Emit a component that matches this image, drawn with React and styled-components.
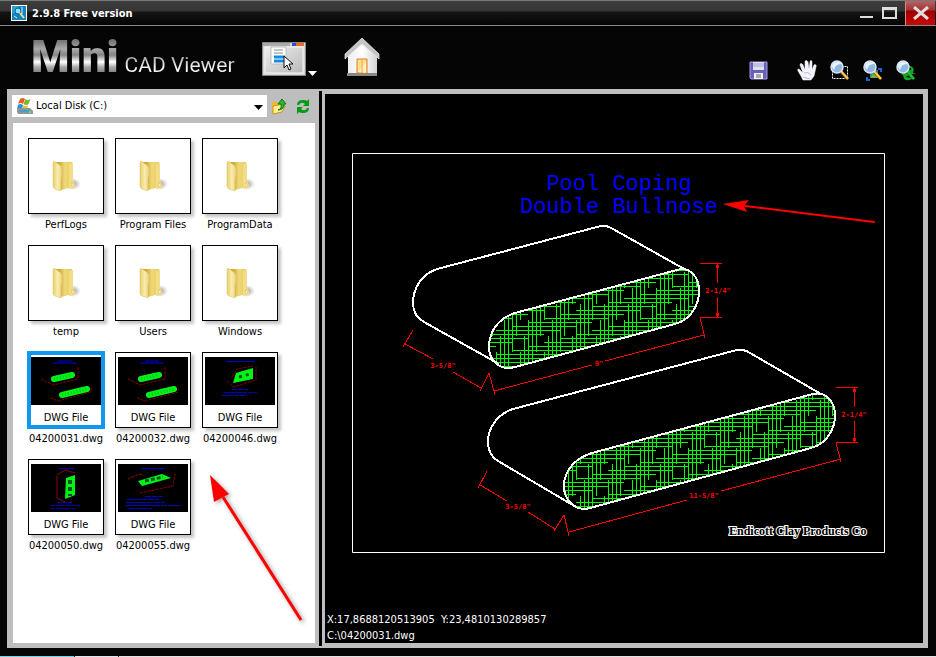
import React from "react";
import styled, { createGlobalStyle, css } from "styled-components";

const GlobalStyle = createGlobalStyle`
  * { box-sizing: border-box; }
  html, body, #root { height: 100%; }
  body { margin: 0; background: #000; overflow: hidden; }
  body, button, select {
    font-family: "DejaVu Sans Condensed", "DejaVu Sans", sans-serif;
    font-size: 11px;
  }
  svg { display: block; }
`;

const Window = styled.div`
  display: flex;
  flex-direction: column;
  height: 100vh;
  background: #050505;
`;

const TitleBar = styled.header`
  display: flex;
  align-items: center;
  flex: 0 0 26px;
  padding-left: 11px;
  color: #fff;
  border-top: 1px solid #777;
  border-bottom: 1px solid #8a8a8a;
  background: linear-gradient(#3d3d3d 0, #353535 10px, #151515 11px, #040404 100%);
`;

const Title = styled.h1`
  flex: 1;
  margin: 0 0 0 5px;
  font-size: 11px;
  font-weight: bold;
`;

const BareButton = styled.button`
  display: flex;
  align-items: center;
  justify-content: center;
  padding: 0;
  border: 0;
  background: none;
  color: inherit;
`;

const CaptionButton = styled(BareButton)`
  width: 23px;
  height: 24px;
`;

const CloseButton = styled(BareButton)`
  width: 30px;
  height: 24px;
  margin: 0 1px 0 4px;
  border-left: 1px solid #d88;
  background: linear-gradient(#b56464 0, #a13434 9px, #9c0000 10px, #c80808 100%);
`;

const Header = styled.div`
  display: flex;
  align-items: flex-start;
  flex: none;
  height: 63px;
  padding: 0 20px 0 31px;
`;

const Logo = styled.div`
  display: flex;
  align-items: baseline;
  width: 231px;
  padding-top: 5px;
  line-height: 52px;
  white-space: nowrap;
`;

const metal = css`
  color: transparent;
  background-clip: text;
  -webkit-background-clip: text;
`;

const LogoMark = styled.span`
  ${metal}
  font-family: Roboto, sans-serif;
  font-size: 44px;
  font-weight: 900;
  background-image: linear-gradient(#777 10px, #aaa 18px, #858585 24px, #fff 31px, #aaa 36px, #707070 44px);
`;

const LogoName = styled.span`
  ${metal}
  margin-left: 6px;
  font-family: Roboto, sans-serif;
  font-size: 21px;
  background-image: linear-gradient(#999 16px, #fff 30px, #bbb 42px);
`;

const OpenButton = styled(BareButton)`
  align-items: flex-end;
  gap: 2px;
  margin-top: 15px;
`;

const HomeButton = styled(BareButton)`
  margin: 11px 0 0 27px;
`;

const Tools = styled.div`
  display: flex;
  gap: 12px;
  margin: 34px 0 0 auto;
`;

const ToolButton = styled(BareButton)`
  width: 21px;
  height: 21px;
  margin-right: ${(p) => (p.$apart ? "15px" : "0")};
`;

const Body = styled.main`
  display: flex;
  flex: 1;
  min-height: 0;
  margin: 0 8px 0 7px;
  background: #bebebe;
`;

const Browser = styled.section`
  display: flex;
  flex-direction: column;
  flex: 0 0 312px;
  padding: 6px 4px 5px 5px;
`;

const LocationBar = styled.div`
  display: flex;
  align-items: center;
  height: 22px;
  margin-bottom: 6px;
`;

const DriveBox = styled.label`
  position: relative;
  flex: 0 0 255px;
  height: 22px;
  background: #fff;

  > svg { position: absolute; top: 2px; left: 4px; pointer-events: none; }
  > svg + svg { top: 10px; left: auto; right: 4px; }
`;

const DriveSelect = styled.select`
  width: 100%;
  height: 22px;
  padding: 0 20px 2px 24px;
  border: 0;
  appearance: none;
  background: #fff;
  color: #000;
`;

const NavButton = styled(BareButton)`
  width: 24px;
  height: 22px;
`;

const FileArea = styled.div`
  position: relative;
  flex: 1;
  min-height: 0;
  margin-left: 1px;
  padding: 15px;
  overflow: hidden;
  background: #fff;
`;

const FileGrid = styled.div`
  display: grid;
  grid-template-columns: repeat(auto-fill, 76px);
  gap: 11px;
`;

const FileItem = styled.button`
  display: flex;
  flex-direction: column;
  align-items: center;
  width: 76px;
  height: 96px;
  padding: 0;
  border: 0;
  background: none;
  color: #000;
  white-space: nowrap;
  line-height: 20px;
`;

const Card = styled.span`
  display: flex;
  flex-direction: column;
  flex: none;
  align-items: center;
  justify-content: ${(p) => (p.$drawing ? "flex-start" : "center")};
  width: 76px;
  height: 76px;
  padding-top: ${(p) => (p.$drawing ? "4px" : "0")};
  border: 1px solid #000;
  background: #fff;
  box-shadow: 3px 3px 3px #c4c4c4;
  line-height: 26px;

  > svg { flex: none; }

  ${(p) => p.$selected && css`
    border-color: #1297ee;
    box-shadow: 0 0 0 1px #1297ee, inset 0 0 0 2px #1297ee;
  `}
`;

const FileName = styled.span`
  flex: none;
  margin-top: 1px;
`;

const Callout = styled.svg`
  position: absolute;
  top: 340px;
  left: 187px;
  pointer-events: none;
`;

const Splitter = styled.div`
  flex: 0 0 3px;
  margin: 2px 0;
  background: #000;
`;

const Viewer = styled.section`
  display: flex;
  flex-direction: column;
  flex: 1;
  min-width: 0;
  margin: 5px 5px 5px 3px;
  background: #000;
`;

const Drawing = styled.svg`
  flex: 1;
  width: 100%;
  min-height: 0;
`;

const DrawingTitle = styled.text`
  font-family: "Liberation Mono", monospace;
  font-size: 22px;
  fill: #0000ff;
  text-anchor: middle;
`;

const DimensionText = styled.text`
  font-family: "DejaVu Sans Mono", monospace;
  font-size: 7px;
  font-weight: bold;
  fill: #ff0000;
  text-anchor: middle;
`;

const MakerText = styled.text`
  font-family: "Liberation Serif", serif;
  font-size: 12px;
  font-weight: bold;
  fill: #000;
  stroke: #fff;
  stroke-width: 2px;
  paint-order: stroke;
`;

const Status = styled.footer`
  flex: 0 0 32px;
  padding: 1px 0 0 2px;
  color: #fff;
  line-height: 16px;
  height: 32px;
  white-space: pre;
`;

const BottomEdge = styled.div`
  flex: 0 0 9px;
  border-bottom: 1px solid #e4e4e4;
  border-image: linear-gradient(90deg, #72d5e8 0 75px, #222 75px 76px, #dde8ee 76px 119px, #222 119px 120px, #e4e4e4 120px) 1;
`;

const AppIcon = () => (
  <svg width="16" height="16" viewBox="0 0 16 16">
    <rect x=".5" y=".5" width="15" height="15" fill="#1684bc" stroke="#fff" />
    <path d="M1 1h6v7H1z" fill="#2f9dd0" />
    <circle cx="7" cy="6" r="3" fill="#8fdcf8" stroke="#066192" />
    <path d="M9 8l4 5" stroke="#f6db8c" strokeWidth="2" />
    <path d="M11 2v7M3 11l3 2" stroke="#d4eefa" />
  </svg>
);

const DriveIcon = () => (
  <svg width="18" height="18" viewBox="0 0 18 18">
    <path d="M4 2q3-2 5 0L7 7q-2-2-5 0z" fill="#e95b24" />
    <path d="M9.5 2q2 2 5 0l-2 5q-2 2-5 0z" fill="#79b932" />
    <path d="M2 8q2-2 5 0l-1 4H1z" fill="#348be0" />
    <path d="M7.500 8q2 2 4.500 0l-1 4H6.500z" fill="#f4be28" />
    <path d="M1 11h13l3 3v3H2l-1-2z" fill="#8d969b" />
    <path d="M3 13h10l2 2H4z" fill="#439eca" />
    <path d="M13 14h2v2h-2z" fill="#6de36a" />
  </svg>
);

const UpFolderIcon = () => (
  <svg width="16" height="17" viewBox="0 0 16 17">
    <path d="M1 4l4-1 1 2h4v8l-8 3-1-2z" fill="#e9b834" />
    <path d="M2 8l10-2 2 2-3 6-9 2z" fill="#ffed94" stroke="#c99620" />
    <path d="M7 12q4-1 3-6H7l4-5 4 5h-2q0 6-6 6z" fill="#2fb52e" stroke="#087b17" />
  </svg>
);

const RefreshIcon = () => (
  <svg width="14" height="15" viewBox="0 0 14 15" fill="#079b14">
    <path d="M1 6q0-5 6-5 3 0 4 1l2-2v7H7l2-2Q5 2 3 6z" />
    <path d="M13 9q0 5-6 5-3 0-4-1l-2 2V8h6l-2 2q4 3 6-1z" />
  </svg>
);

const OpenIcon = () => (
  <svg width="44" height="36" viewBox="0 0 44 36">
    <defs>
      <linearGradient id="pane" x2="1" y2="1"><stop stopColor="#eee" /><stop offset="1" stopColor="#b9b9b9" /></linearGradient>
    </defs>
    <path d="M.5 1.500h43v33H.5z" fill="#d8d8d8" stroke="#888" />
    <path d="M1 2h27v3H1z" fill="#aaa" />
    <path d="M30 2h4v3h-4z" fill="#3548e4" /><path d="M34 2h8v3h-8z" fill="#ee6921" />
    <path d="M3 6h38v26H3z" fill="url(#pane)" stroke="#f6f6f6" />
    <path d="M9 6h15v17H9z" fill="#fff" stroke="#bbb" />
    <path d="M12 9h9M12 12h9" stroke="#888" /><path d="M12 16h11M12 20h12" stroke="#168be6" strokeWidth="3" />
    <path d="M22 15v12l3-3 2 5 2-1-2-5h4z" fill="#fff" stroke="#111" />
  </svg>
);

const HomeIcon = () => (
  <svg width="36" height="41" viewBox="0 0 36 41">
    <defs>
      <linearGradient id="wall"><stop stopColor="#eee" /><stop offset=".5" stopColor="#fff" /><stop offset="1" stopColor="#d4d4d4" /></linearGradient>
    </defs>
    <path d="M4 19L18 5l15 14v18H4z" fill="url(#wall)" />
    <path d="M3 36h30v3H3z" fill="#888" />
    <path d="M18 1l17 16v5L18 7 1 22v-5z" fill="#c5c5c5" stroke="#eee" strokeWidth=".7" />
    <path d="M13 22h10v14H13z" fill="#ffdf91" stroke="#dc7c24" />
    <path d="M14 35l8-10v11z" fill="#fff3bd" /><path d="M18 22v14" stroke="#e9a845" />
  </svg>
);

const SaveIcon = () => (
  <svg width="19" height="19" viewBox="0 0 19 19">
    <path d="M1 1h17v17H2l-1-1z" fill="#6b60b7" stroke="#a89de8" />
    <path d="M4 1h11v8H4z" fill="#dde1f4" /><path d="M4 3h11M4 5h11" stroke="#9da3cc" />
    <path d="M5 12h9v6H5z" fill="#f2f2f2" /><path d="M7 13h5v4H7z" fill="#aaa" />
  </svg>
);

const HandIcon = () => (
  <svg width="20" height="21" viewBox="0 0 20 21">
    <path d="M6 20l-2-4-3-5c-1-2 1-3 2-1l3 3-3-8c0-2 2-2 3 0l2 5V2c0-2 2-2 3 0l1 7 1-7c0-2 2-2 2 0v8l2-5c1-1 3 0 2 2l-2 9-3 4z" fill="#f4f4fc" stroke="#fff" strokeWidth=".5" />
    <path d="M7 13q4-2 7 2M6 17l7 2" stroke="#b5b9d2" fill="none" />
  </svg>
);

const LensIcon = ({ mode }) => (
  <svg width="21" height="21" viewBox="0 0 21 21">
    {mode === "area" && <path d="M3.500 6.500h15v12h-15z" fill="none" stroke="#fff" strokeDasharray="2 1" />}
    {mode === "extents" && <><path d="M8 10h8v7H8z" fill="#397ba0" /><path d="M8 18l5-7 5 7z" fill="#65b849" /><path d="M16 9h3v3M5 17v3h3" stroke="#1663d1" strokeWidth="2" fill="none" /></>}
    {mode === "redraw" && <><path d="M13 5q8 2 5 8h3l-6 2-2-5h3q1-2-3-3z" fill="#16a626" /><path d="M17 19q-8 4-9-4H6l5-4 3 5h-3q2 3 6 1z" fill="#16a626" /></>}
    <path d="M12 12l7 7" stroke={mode === "redraw" ? "#0b7d20" : "#8d4b10"} strokeWidth="3" />
    <path d="M12 11l7 8" stroke={mode === "redraw" ? "#23bf37" : "#ffcd43"} strokeWidth="2" />
    <circle cx="8" cy="7" r="6" fill="#91b9e2" stroke="#dce5f4" strokeWidth="1.500" />
    <path d="M3 7q0-5 5-5t4 2q-6 0-7 6z" fill="#e6f4ff" />
  </svg>
);

const FolderIcon = () => (
  <svg width="30" height="32" viewBox="0 0 30 32">
    <defs>
      <linearGradient id="folder-back"><stop offset=".3" stopColor="#d0aa38" /><stop offset=".6" stopColor="#f0d878" /><stop offset="1" stopColor="#e8cc62" /></linearGradient>
      <linearGradient id="folder-front"><stop stopColor="#e9cf68" /><stop offset=".5" stopColor="#f9ecae" /><stop offset="1" stopColor="#ead078" /></linearGradient>
      <radialGradient id="folder-shade"><stop stopColor="#777" stopOpacity=".8" /><stop offset="1" stopColor="#999" stopOpacity="0" /></radialGradient>
    </defs>
    <ellipse cx="22" cy="24" rx="8" ry="6" fill="url(#folder-shade)" />
    <path d="M3 2h18v25l-11 3-7-3z" fill="url(#folder-back)" />
    <path d="M18 4l4-1v18l2 3v4l-6 1z" fill="#f2dc86" />
    <path d="M3 1l7 5q2 3 1 9l-1 4v12l-6-2q-2-1-2-3V3z" fill="url(#folder-front)" stroke="#d6bd60" strokeWidth=".5" />
    <path d="M21 27v-5l2 4z" fill="#fff" stroke="#d5b443" strokeWidth=".5" />
  </svg>
);

const thumbs = {
  slabs: (
    <>
      <path d="M22 6h24M27 4h14" stroke="#00d" />
      <path d="M10 22l12 6 25-6V10M19 41l8 3 33-9V29" stroke="#810000" fill="none" strokeDasharray="3 1" />
      <path d="M23 22l18-4M31 38l25-6" stroke="#00f516" strokeWidth="6" strokeLinecap="round" />
      <path d="M23 22l18-4M31 38l25-6" stroke="#0b3" strokeWidth="3" strokeDasharray="1 2" />
    </>
  ),
  angled: (
    <>
      <path d="M21 4.500h29" stroke="#00d" />
      <path d="M22 24l7 6 22-7V10M27 20l5-8 16-3" stroke="#810000" fill="none" strokeDasharray="3 1" />
      <path d="M28 26l3-10 17-5v11z" fill="#00f516" /><path d="M34 20l11-3" stroke="#052" strokeWidth="3" strokeDasharray="3 4" />
      <path d="M27 32.500h16M19 35.500h33M17 38.500h25" stroke="#00c" strokeDasharray="5 1" />
    </>
  ),
  upright: (
    <>
      <path d="M28 4.500h15" stroke="#00d" />
      <path d="M26 11l8-5 10 3M26 12v22l8 4" stroke="#900000" fill="none" />
      <path d="M35 14l9-3v20l-10 4z" fill="#00f516" /><path d="M39 16v16" stroke="#052" strokeWidth="4" strokeDasharray="4 3" />
      <path d="M27 38.500h15M20 41.500h29M20 44.500h24" stroke="#00c" strokeDasharray="4 1" />
    </>
  ),
  flat: (
    <>
      <path d="M24 4.500h22" stroke="#00d" />
      <path d="M22 29l33-7 2-12M10 15l9-4 6-1" stroke="#900000" fill="none" strokeDasharray="3 1" />
      <path d="M20 17l24-7 9 4-29 8z" fill="#00f516" /><path d="M27 17l18-4" stroke="#052" strokeWidth="3" strokeDasharray="4 2" />
      <path d="M27 32.500h18M9 35.500h32M8 38.500h39M8 41.500h55M10 44.500h24" stroke="#00c" strokeDasharray="6 1" />
    </>
  ),
};

const Thumbnail = ({ kind }) => (
  <svg width="70" height="48" viewBox="0 0 70 48">
    <path d="M0 0h70v48H0z" fill="#000" />
    {thumbs[kind]}
  </svg>
);

const files = [
  { name: "PerfLogs" }, { name: "Program Files" }, { name: "ProgramData" },
  { name: "temp" }, { name: "Users" }, { name: "Windows" },
  { name: "04200031.dwg", kind: "slabs", selected: true },
  { name: "04200032.dwg", kind: "slabs" },
  { name: "04200046.dwg", kind: "angled" },
  { name: "04200050.dwg", kind: "upright" },
  { name: "04200055.dwg", kind: "flat" },
];

// Houndstooth hatch: lines 4 apart, each dash 64 long with a 32 gap, stepped by 16 per line.
const steps = [0, 1, 2, 3, 4, 5];
const across = steps.map((k) => `M${k * 16 - 96} ${22.5 - k * 4}h64M${k * 16} ${22.5 - k * 4}h64`).join("");
const upward = steps.map((k) => `M${k * 4 + 0.5} ${96 - k * 16}v-64M${k * 4 + 0.5} ${192 - k * 16}v-64`).join("");

const faces = [
  "M515 313L677 270C690 266 699 277 699 291C699 306 690 320 675 324L515 367C500 371 489 361 489 347C489 331 499 318 515 313Z",
  "M592 453L813 394C826 391 835 402 835 415C835 430 826 444 811 448L590 508C575 512 564 500 564 486C564 471 575 458 592 453Z",
];

const Plan = () => (
  <Drawing viewBox="325 94 598 517" role="img" aria-label="Pool Coping Double Bullnose">
    <defs>
      <pattern id="across" width="96" height="24" patternUnits="userSpaceOnUse"><path d={across} stroke="#00ff00" /></pattern>
      <pattern id="upward" width="24" height="96" patternUnits="userSpaceOnUse"><path d={upward} stroke="#00ff00" /></pattern>
    </defs>
    <path d="M352.500 153.500h532v399h-532z" fill="none" stroke="#fff" />
    <DrawingTitle x="619" y="190">Pool Coping</DrawingTitle>
    <DrawingTitle x="619" y="213">Double Bullnose</DrawingTitle>
    {faces.map((d) => (
      <g key={d}>
        <path d={d} fill="url(#across)" />
        <path d={d} fill="url(#upward)" />
        <path d={d} fill="none" stroke="#fff" strokeWidth="2" shapeRendering="crispEdges" />
      </g>
    ))}
    <g fill="none" stroke="#fff" strokeWidth="2" shapeRendering="crispEdges">
      <path d="M686 270L613 229Q606 224 597 227L437 269C422 274 413 288 413 303Q413 316 424 322L499 364" />
      <path d="M821 394L750 353Q743 348 733 351L513 409C498 414 488 427 488 442Q488 455 498 461L571 504" />
    </g>
    <g fill="none" stroke="#ff0000" shapeRendering="crispEdges">
      <path d="M700 263.500h22M700 317.500h22M717.500 264v19M717.500 297v20M716 268l1.500-4 1.500 4M716 313l1.500 4 1.500-4" />
      <path d="M700 318l5 20M704 335l-99 26M592 365l-98 26M495 395l-6-22-9 18M481 388l-28-16M433 359l-28-15M413 330l-10 17" />
      <path d="M836 387.500h22M836 442.500h22M854.500 388v19M854.500 421v21M853 392l1.500-4 1.500 4M853 438l1.500 4 1.500-4" />
      <path d="M836 443l5 19M841 459l-120 32M687 500l-118 32M569 536l-5-21-10 16M555 529l-27-17M507 501l-27-16M487 471l-9 17" />
    </g>
    <DimensionText x="718" y="293">2-1/4"</DimensionText>
    <DimensionText x="443" y="368">3-5/8"</DimensionText>
    <DimensionText x="599" y="366">9"</DimensionText>
    <DimensionText x="854" y="417">2-1/4"</DimensionText>
    <DimensionText x="518" y="509">3-5/8"</DimensionText>
    <DimensionText x="704" y="498">11-5/8"</DimensionText>
    <MakerText x="729" y="535">Endicott Clay Products Co</MakerText>
    <path d="M874 222L745 206" stroke="#ff0000" strokeWidth="2" strokeLinecap="round" />
    <path d="M723 204L749 200 744 206 747 212z" fill="#ff0000" />
  </Drawing>
);

export default function App() {
  return (
    <>
      <GlobalStyle />
      <Window>
        <TitleBar>
          <AppIcon />
          <Title>2.9.8 Free version</Title>
          <CaptionButton aria-label="Minimize">
            <svg width="15" height="14" viewBox="0 0 15 14"><path d="M1 11h13" stroke="#ddd" strokeWidth="2" /></svg>
          </CaptionButton>
          <CaptionButton aria-label="Maximize">
            <svg width="15" height="13" viewBox="0 0 15 13"><path d="M1 1h13v10H1zM1 2h13" fill="none" stroke="#ddd" strokeWidth="2" /></svg>
          </CaptionButton>
          <CloseButton aria-label="Close">
            <svg width="18" height="14" viewBox="0 0 18 14"><path d="M2 1l14 12M16 1L2 13" stroke="#e4dcdc" strokeWidth="3" /></svg>
          </CloseButton>
        </TitleBar>
        <Header>
          <Logo><LogoMark>Mini</LogoMark><LogoName>CAD Viewer</LogoName></Logo>
          <OpenButton aria-label="Open">
            <OpenIcon />
            <svg width="9" height="6" viewBox="0 0 9 6"><path d="M0 0h9L4.500 5z" fill="#fff" /></svg>
          </OpenButton>
          <HomeButton aria-label="Home"><HomeIcon /></HomeButton>
          <Tools>
            <ToolButton aria-label="Save" $apart><SaveIcon /></ToolButton>
            <ToolButton aria-label="Pan"><HandIcon /></ToolButton>
            <ToolButton aria-label="Zoom window"><LensIcon mode="area" /></ToolButton>
            <ToolButton aria-label="Zoom extents"><LensIcon mode="extents" /></ToolButton>
            <ToolButton aria-label="Zoom previous"><LensIcon mode="redraw" /></ToolButton>
          </Tools>
        </Header>
        <Body>
          <Browser>
            <LocationBar>
              <DriveBox>
                <DriveSelect aria-label="Drive"><option>Local Disk (C:)</option></DriveSelect>
                <DriveIcon />
                <svg width="9" height="5" viewBox="0 0 9 5"><path d="M0 0h9L4.500 5z" fill="#000" /></svg>
              </DriveBox>
              <NavButton aria-label="Up one folder"><UpFolderIcon /></NavButton>
              <NavButton aria-label="Refresh"><RefreshIcon /></NavButton>
            </LocationBar>
            <FileArea>
              <FileGrid>
                {files.map((f) => (
                  <FileItem key={f.name}>
                    <Card $drawing={!!f.kind} $selected={f.selected}>
                      {f.kind ? <><Thumbnail kind={f.kind} />DWG File</> : <FolderIcon />}
                    </Card>
                    <FileName>{f.name}</FileName>
                  </FileItem>
                ))}
              </FileGrid>
              <Callout width="112" height="170" viewBox="200 463 112 170" aria-hidden="true">
                <defs><filter id="soft"><feGaussianBlur stdDeviation="2" /></filter></defs>
                <g filter="url(#soft)" opacity=".5">
                  <path d="M303 622L226 500" stroke="#333" strokeWidth="3" /><path d="M212 477l19 19-7 2-7 6z" fill="#333" />
                </g>
                <path d="M301 620L223 497" stroke="#ff0000" strokeWidth="3" />
                <path d="M210 475L229 494 223 497 214 502z" fill="#ff0000" />
              </Callout>
            </FileArea>
          </Browser>
          <Splitter />
          <Viewer>
            <Plan />
            <Status>{"X:17,8688120513905  Y:23,4810130289857\nC:\\04200031.dwg"}</Status>
          </Viewer>
        </Body>
        <BottomEdge />
      </Window>
    </>
  );
}
